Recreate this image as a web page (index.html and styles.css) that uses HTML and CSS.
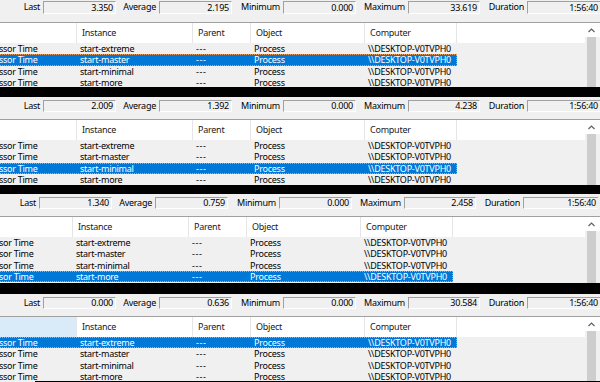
FILE: index.html
```html
<!DOCTYPE html>
<html lang="en">
<head>
  <meta charset="UTF-8" />
  <title>Performance Monitor - Processor Time</title>
  <link rel="stylesheet" href="styles.css">
</head>
<body>
  <!-- capture 1: start-master selected -->
  <div class="panel first">
    <div class="stats">
      <span class="label">Last</span><span class="field">3.350</span>
      <span class="label">Average</span><span class="field">2.195</span>
      <span class="label">Minimum</span><span class="field">0.000</span>
      <span class="label">Maximum</span><span class="field">33.619</span>
      <span class="label">Duration</span><span class="field">1:56:40</span>
    </div>
    <div class="list">
      <div class="columns">
        <div class="head">
          <span class="col c-counter"></span>
          <span class="col c-instance">Instance</span>
          <span class="col c-parent">Parent</span>
          <span class="col c-object">Object</span>
          <span class="col c-computer">Computer</span>
          <span class="col c-rest"></span>
        </div>
        <div class="row"><span class="col c-counter">% Processor Time</span><span class="col c-instance">start-extreme</span><span class="col c-parent">---</span><span class="col c-object">Process</span><span class="col c-computer">\\DESKTOP-V0TVPH0</span></div>
        <div class="row sel"><span class="col c-counter">% Processor Time</span><span class="col c-instance">start-master</span><span class="col c-parent">---</span><span class="col c-object">Process</span><span class="col c-computer">\\DESKTOP-V0TVPH0</span></div>
        <div class="row"><span class="col c-counter">% Processor Time</span><span class="col c-instance">start-minimal</span><span class="col c-parent">---</span><span class="col c-object">Process</span><span class="col c-computer">\\DESKTOP-V0TVPH0</span></div>
        <div class="row"><span class="col c-counter">% Processor Time</span><span class="col c-instance">start-more</span><span class="col c-parent">---</span><span class="col c-object">Process</span><span class="col c-computer">\\DESKTOP-V0TVPH0</span></div>
      </div>
      <div class="scrollbar">
        <span class="arrow"><svg width="7" height="5" viewBox="0 0 7 5"><polyline points="0.5,4 3.5,1 6.5,4" fill="none" stroke="#606060" stroke-width="1.2"/></svg></span>
        <span class="thumb"></span>
      </div>
    </div>
  </div>
  <div class="band"></div>

  <!-- capture 2: start-minimal selected -->
  <div class="panel">
    <div class="stats">
      <span class="label">Last</span><span class="field">2.009</span>
      <span class="label">Average</span><span class="field">1.392</span>
      <span class="label">Minimum</span><span class="field">0.000</span>
      <span class="label">Maximum</span><span class="field">4.238</span>
      <span class="label">Duration</span><span class="field">1:56:40</span>
    </div>
    <div class="list">
      <div class="columns">
        <div class="head">
          <span class="col c-counter"></span>
          <span class="col c-instance">Instance</span>
          <span class="col c-parent">Parent</span>
          <span class="col c-object">Object</span>
          <span class="col c-computer">Computer</span>
          <span class="col c-rest"></span>
        </div>
        <div class="row"><span class="col c-counter">% Processor Time</span><span class="col c-instance">start-extreme</span><span class="col c-parent">---</span><span class="col c-object">Process</span><span class="col c-computer">\\DESKTOP-V0TVPH0</span></div>
        <div class="row"><span class="col c-counter">% Processor Time</span><span class="col c-instance">start-master</span><span class="col c-parent">---</span><span class="col c-object">Process</span><span class="col c-computer">\\DESKTOP-V0TVPH0</span></div>
        <div class="row sel"><span class="col c-counter">% Processor Time</span><span class="col c-instance">start-minimal</span><span class="col c-parent">---</span><span class="col c-object">Process</span><span class="col c-computer">\\DESKTOP-V0TVPH0</span></div>
        <div class="row"><span class="col c-counter">% Processor Time</span><span class="col c-instance">start-more</span><span class="col c-parent">---</span><span class="col c-object">Process</span><span class="col c-computer">\\DESKTOP-V0TVPH0</span></div>
      </div>
      <div class="scrollbar">
        <span class="arrow"><svg width="7" height="5" viewBox="0 0 7 5"><polyline points="0.5,4 3.5,1 6.5,4" fill="none" stroke="#606060" stroke-width="1.2"/></svg></span>
        <span class="thumb"></span>
      </div>
    </div>
  </div>
  <div class="band thin"></div>

  <!-- capture 3: start-more selected, window a little to the left -->
  <div class="panel shift">
    <div class="stats">
      <span class="label">Last</span><span class="field">1.340</span>
      <span class="label">Average</span><span class="field">0.759</span>
      <span class="label">Minimum</span><span class="field">0.000</span>
      <span class="label">Maximum</span><span class="field">2.458</span>
      <span class="label">Duration</span><span class="field">1:56:40</span>
    </div>
    <div class="list">
      <div class="columns">
        <div class="head">
          <span class="col c-counter"></span>
          <span class="col c-instance">Instance</span>
          <span class="col c-parent">Parent</span>
          <span class="col c-object">Object</span>
          <span class="col c-computer">Computer</span>
          <span class="col c-rest"></span>
        </div>
        <div class="row"><span class="col c-counter">% Processor Time</span><span class="col c-instance">start-extreme</span><span class="col c-parent">---</span><span class="col c-object">Process</span><span class="col c-computer">\\DESKTOP-V0TVPH0</span></div>
        <div class="row"><span class="col c-counter">% Processor Time</span><span class="col c-instance">start-master</span><span class="col c-parent">---</span><span class="col c-object">Process</span><span class="col c-computer">\\DESKTOP-V0TVPH0</span></div>
        <div class="row"><span class="col c-counter">% Processor Time</span><span class="col c-instance">start-minimal</span><span class="col c-parent">---</span><span class="col c-object">Process</span><span class="col c-computer">\\DESKTOP-V0TVPH0</span></div>
        <div class="row sel"><span class="col c-counter">% Processor Time</span><span class="col c-instance">start-more</span><span class="col c-parent">---</span><span class="col c-object">Process</span><span class="col c-computer">\\DESKTOP-V0TVPH0</span></div>
      </div>
      <div class="scrollbar">
        <span class="arrow"><svg width="7" height="5" viewBox="0 0 7 5"><polyline points="0.5,4 3.5,1 6.5,4" fill="none" stroke="#606060" stroke-width="1.2"/></svg></span>
        <span class="thumb"></span>
      </div>
    </div>
  </div>
  <div class="band wide"></div>

  <!-- capture 4: start-extreme selected, pointer over first header -->
  <div class="panel last">
    <div class="stats">
      <span class="label">Last</span><span class="field">0.000</span>
      <span class="label">Average</span><span class="field">0.636</span>
      <span class="label">Minimum</span><span class="field">0.000</span>
      <span class="label">Maximum</span><span class="field">30.584</span>
      <span class="label">Duration</span><span class="field">1:56:40</span>
    </div>
    <div class="list">
      <div class="columns">
        <div class="head">
          <span class="col c-counter hover"></span>
          <span class="col c-instance">Instance</span>
          <span class="col c-parent">Parent</span>
          <span class="col c-object">Object</span>
          <span class="col c-computer">Computer</span>
          <span class="col c-rest"></span>
        </div>
        <div class="row sel"><span class="col c-counter">% Processor Time</span><span class="col c-instance">start-extreme</span><span class="col c-parent">---</span><span class="col c-object">Process</span><span class="col c-computer">\\DESKTOP-V0TVPH0</span></div>
        <div class="row"><span class="col c-counter">% Processor Time</span><span class="col c-instance">start-master</span><span class="col c-parent">---</span><span class="col c-object">Process</span><span class="col c-computer">\\DESKTOP-V0TVPH0</span></div>
        <div class="row"><span class="col c-counter">% Processor Time</span><span class="col c-instance">start-minimal</span><span class="col c-parent">---</span><span class="col c-object">Process</span><span class="col c-computer">\\DESKTOP-V0TVPH0</span></div>
        <div class="row"><span class="col c-counter">% Processor Time</span><span class="col c-instance">start-more</span><span class="col c-parent">---</span><span class="col c-object">Process</span><span class="col c-computer">\\DESKTOP-V0TVPH0</span></div>
      </div>
      <div class="scrollbar">
        <span class="arrow"><svg width="7" height="5" viewBox="0 0 7 5"><polyline points="0.5,4 3.5,1 6.5,4" fill="none" stroke="#606060" stroke-width="1.2"/></svg></span>
        <span class="thumb"></span>
      </div>
    </div>
  </div>
  <div class="band edge"></div>
</body>
</html>
```

FILE: styles.css
```css
* { box-sizing: border-box; }
body {
  margin: 0;
  width: 600px;
  height: 382px;
  overflow: hidden;
  background: #f0f0f0;
  font-family: "Noto Sans", "Open Sans", sans-serif;
  font-size: 9px;
  letter-spacing: -0.25px;
  color: #000;
}

/* one cropped capture of the report window */
.panel {
  height: 88px;
  display: flex;
  flex-direction: column;
  background: #f0f0f0;
  overflow: hidden;
}
.panel.first { height: 87px; }
.panel.shift { height: 89px; }
.panel.last { height: 87px; }

.band { height: 10px; background: #000; }
.band.thin { height: 9px; }
.band.wide { height: 11px; }
.band.edge { height: 1px; margin-left: 35px; }

/* statistics strip */
.stats {
  flex: 0 0 23px;
  display: grid;
  grid-template-columns: 43px 73px 43px 73px 51px 73px 52px 72px 47px 73px;
  align-items: start;
  padding-top: 3px;
  border-bottom: 1px solid #a0a0a0;
}
.panel.first .stats { padding-top: 1px; }
.panel.first .field { height: 13px; line-height: 11px; }
.panel.shift .stats { margin-left: -4px; padding-right: 2px; }
.panel.shift .stats .field:last-child { width: 75px; }
.label {
  text-align: right;
  padding-right: 3px;
  line-height: 12px;
  white-space: nowrap;
}
.field {
  height: 12px;
  line-height: 10px;
  padding-right: 2px;
  text-align: right;
  white-space: nowrap;
  background: #f0f0f0;
  border: 1px solid;
  border-color: #a0a0a0 #fff #fff #a0a0a0;
}
.field:last-child { border-right: none; }

/* counter list */
.list {
  flex: 1;
  display: flex;
  min-height: 0;
}
.columns {
  flex: 1;
  min-width: 0;
  overflow: hidden;
}
.head {
  display: flex;
  height: 20px;
  line-height: 20px;
  margin-left: -36px;
  background: #fff;
  color: #1a1a1a;
}
.head .col {
  padding-left: 5px;
  border-right: 1px solid #e5e5e5;
}
.head .c-rest { flex: 1; border-right: none; }
.head .hover { background: #d9ebf9; }
.row {
  display: flex;
  width: 493px;
  height: 11.25px;
  line-height: 11.25px;
  margin-left: -36px;
}
.panel.shift .head, .panel.shift .row { margin-left: -40px; }
.row .col { padding-left: 3px; }
.col {
  flex: none;
  white-space: nowrap;
  overflow: hidden;
}
.c-counter { width: 113px; }
.c-instance { width: 116px; }
.c-parent { width: 58px; }
.row .c-parent { letter-spacing: 0.6px; }
.c-object { width: 114px; }
.c-computer { width: 92px; }

.row.sel {
  background: #0078d7;
  color: #fff;
  outline: 1px dotted #e8a060;
  outline-offset: -1px;
}

/* vertical scrollbar */
.scrollbar {
  flex: 0 0 15px;
  display: flex;
  flex-direction: column;
  background: #f0f0f0;
}
.arrow {
  height: 14px;
  display: flex;
  align-items: center;
  padding-left: 3px;
  background: #fff;
}
.arrow svg { display: block; }
.thumb {
  flex: 1;
  width: 9px;
  margin-left: 2px;
  background: #cdcdcd;
}
```
